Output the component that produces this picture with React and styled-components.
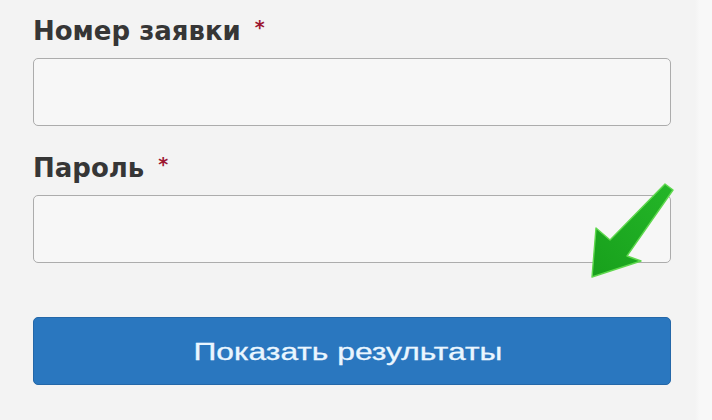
import React from "react";
import styled, { createGlobalStyle } from "styled-components";

const Global = createGlobalStyle`
  html, body { margin: 0; padding: 0; background: #f3f3f3; }
  body { width: 712px; height: 420px; overflow: hidden; }
`;

const Page = styled.div`
  position: relative;
  width: 712px;
  height: 420px;
  box-sizing: border-box;
  padding: 16px 0 0 33px;
  background: linear-gradient(to right, #f3f3f3 0, #f3f3f3 695px, #f8f8f8 700px);
`;

const Form = styled.form`
  width: 638px;
  display: flex;
  flex-direction: column;
  margin: 0;
`;

const Field = styled.div`
  display: flex;
  flex-direction: column;
  margin-bottom: ${(p) => p.$gap}px;
`;

const Label = styled.label`
  font-family: "DejaVu Sans", "Verdana", sans-serif;
  font-weight: bold;
  font-size: 26px;
  line-height: 30px;
  color: #363636;
  margin-bottom: 10px;
  white-space: nowrap;
`;

const Required = styled.span`
  color: #9c1730;
  font-size: 19px;
  position: relative;
  top: -6px;
  margin-left: 14px;
`;

const Input = styled.input`
  box-sizing: border-box;
  width: 100%;
  height: 68px;
  margin: 0;
  border: 1px solid #acacac;
  border-radius: 5px;
  background: #f7f7f7;
  outline: none;
`;

const Button = styled.button`
  box-sizing: border-box;
  width: 100%;
  height: 68px;
  margin: 0;
  border: 1px solid #2467a8;
  border-radius: 5px;
  background: #2a77bf;
  color: #eaf6ff;
  cursor: pointer;
  display: flex;
  align-items: center;
  justify-content: center;
  padding: 0 8px 0 0;
`;

const ButtonText = styled.span`
  display: inline-block;
  font-family: "Liberation Sans", Arial, sans-serif;
  font-size: 23px;
  line-height: 23px;
  transform: scaleX(1.38);
  transform-origin: center;
  position: relative;
  top: 1px;
  -webkit-text-stroke: 0.3px #eaf6ff;
`;

const Arrow = styled.svg`
  position: absolute;
  left: 585px;
  top: 178px;
  width: 95px;
  height: 105px;
  overflow: visible;
`;

export default function App() {
  return (
    <>
      <Global />
      <Page>
        <Form onSubmit={(e) => e.preventDefault()}>
          <Field $gap={27}>
            <Label>
              Номер заявки<Required>*</Required>
            </Label>
            <Input type="text" />
          </Field>
          <Field $gap={54}>
            <Label>
              Пароль<Required>*</Required>
            </Label>
            <Input type="password" />
          </Field>
          <Button type="submit">
            <ButtonText>Показать результаты</ButtonText>
          </Button>
        </Form>
        <Arrow viewBox="585 178 95 105">
          <defs>
            <linearGradient id="ag" x1="0" y1="1" x2="1" y2="0">
              <stop offset="0" stopColor="#18a01c" />
              <stop offset="1" stopColor="#24b628" />
            </linearGradient>
          </defs>
          <polygon
            points="665,184 673,190 627,256 641,261 592,277 596,228 610,240"
            fill="url(#ag)"
            stroke="#5fd84e"
            strokeWidth="1.4"
            strokeLinejoin="round"
          />
        </Arrow>
      </Page>
    </>
  );
}
